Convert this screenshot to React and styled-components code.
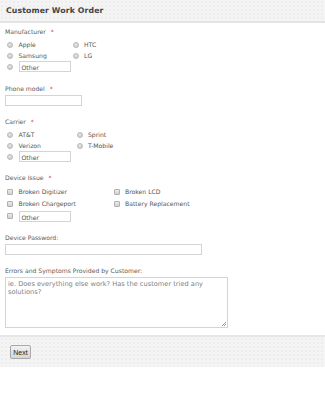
import React from "react";
import styled, { createGlobalStyle } from "styled-components";

const GlobalStyle = createGlobalStyle`
  body {
    margin: 0;
    background: #fff;
    font-family: "DejaVu Sans", Verdana, sans-serif;
    color: #555;
  }
`;

const dots = `
  background-color: #f4f4f4;
  background-image: radial-gradient(#e4e4e4 0.6px, transparent 0.8px);
  background-size: 4px 4px;
`;

const Header = styled.div`
  ${dots}
  height: 21px;
  border-bottom: 2px solid #e3e3e3;
  display: flex;
  align-items: center;
  padding-left: 6px;
  h1 {
    margin: 0;
    font-size: 7.8px;
    font-weight: 700;
    color: #444;
    letter-spacing: 0.1px;
  }
`;

const Form = styled.div`
  padding: 2.5px 5px 0;
`;

const Field = styled.div`
  margin-bottom: ${(p) => p.gap ?? 10}px;
`;

const Label = styled.div`
  font-size: 6.1px;
  color: #5a5a5a;
  height: 11px;
  line-height: 11px;
  margin-bottom: ${(p) => p.mb ?? 2.5}px;
  span {
    color: #e0443a;
    margin-left: 5px;
  }
`;

const Options = styled.div`
  display: grid;
  grid-template-columns: ${(p) => p.col}px auto;
  grid-auto-rows: ${(p) => p.row}px;
  padding-left: 2px;
`;

const Option = styled.div`
  display: flex;
  align-items: center;
  font-size: 6.1px;
  color: #555;
`;

const Radio = styled.span`
  box-sizing: border-box;
  width: 6px;
  height: 6px;
  border-radius: 50%;
  background: radial-gradient(circle at 40% 35%, #e8e8e8, #c4c4c4);
  border: 0.5px solid #b8b8b8;
  margin-right: 5.5px;
  flex: none;
`;

const Check = styled.span`
  box-sizing: border-box;
  width: 6px;
  height: 6px;
  border-radius: 1px;
  background: linear-gradient(#ececec, #d0d0d0);
  border: 0.5px solid #b0b0b0;
  margin-right: 5.5px;
  flex: none;
`;

const TextBox = styled.div`
  box-sizing: border-box;
  width: ${(p) => p.w}px;
  height: ${(p) => p.h || 11}px;
  border: 1px solid #d4d4d4;
  background: #fff;
  font-size: 6.2px;
  color: #555;
  padding: 1px 2px;
  line-height: 9px;
`;

const TextArea = styled(TextBox)`
  position: relative;
  padding: 2px 2px;
  font-size: 6.65px;
  line-height: 8px;
  color: #808080;
  &::after {
    content: "";
    position: absolute;
    right: 1px;
    bottom: 1px;
    width: 4px;
    height: 4px;
    background: linear-gradient(135deg, transparent 45%, #999 45%, #999 55%, transparent 55%, transparent 70%, #999 70%, #999 80%, transparent 80%);
  }
`;

const Footer = styled.div`
  ${dots}
  border-top: 2px solid #e6e6e6;
  height: 30px;
  display: flex;
  align-items: center;
  padding-left: 10px;
`;

const Button = styled.button`
  font-family: "Liberation Sans", Arial, sans-serif;
  font-size: 7px;
  color: #222;
  height: 14px;
  width: 21px;
  padding: 0;
  border: 1px solid #a8a8a8;
  border-radius: 2px;
  background: linear-gradient(#f2f2f2, #d6d6d6);
`;

function ChoiceGroup({ label, col, row, items, kind }) {
  const Mark = kind === "check" ? Check : Radio;
  return (
    <>
      <Label>
        {label}
        <span>*</span>
      </Label>
      <Options col={col} row={row}>
        {items.map((it, i) => (
          <Option key={i}>
            <Mark />
            {it}
          </Option>
        ))}
        <Option>
          <Mark />
          <TextBox w={52}>Other</TextBox>
        </Option>
      </Options>
    </>
  );
}

export default function App() {
  return (
    <>
      <GlobalStyle />
      <Header>
        <h1>Customer Work Order</h1>
      </Header>
      <Form>
        <Field gap={10.5}>
          <ChoiceGroup
            label="Manufacturer"
            col={65.5}
            row={11}
            items={["Apple", "HTC", "Samsung", "LG"]}
          />
        </Field>
        <Field gap={9.5}>
          <Label mb={1.5}>
            Phone model<span>*</span>
          </Label>
          <TextBox w={77} />
        </Field>
        <Field gap={10}>
          <ChoiceGroup
            label="Carrier"
            col={69.5}
            row={11}
            items={["AT&T", "Sprint", "Verizon", "T-Mobile"]}
          />
        </Field>
        <Field gap={10}>
          <ChoiceGroup
            label="Device Issue"
            kind="check"
            col={106.5}
            row={12.3}
            items={[
              "Broken Digitizer",
              "Broken LCD",
              "Broken Chargeport",
              "Battery Replacement",
            ]}
          />
        </Field>
        <Field gap={10}>
          <Label mb={0.5}>Device Password:</Label>
          <TextBox w={197} />
        </Field>
        <Field gap={7}>
          <Label mb={1.5}>Errors and Symptoms Provided by Customer:</Label>
          <TextArea w={223} h={51}>
            ie. Does everything else work? Has the customer tried any solutions?
          </TextArea>
        </Field>
      </Form>
      <Footer>
        <Button>Next</Button>
      </Footer>
    </>
  );
}
